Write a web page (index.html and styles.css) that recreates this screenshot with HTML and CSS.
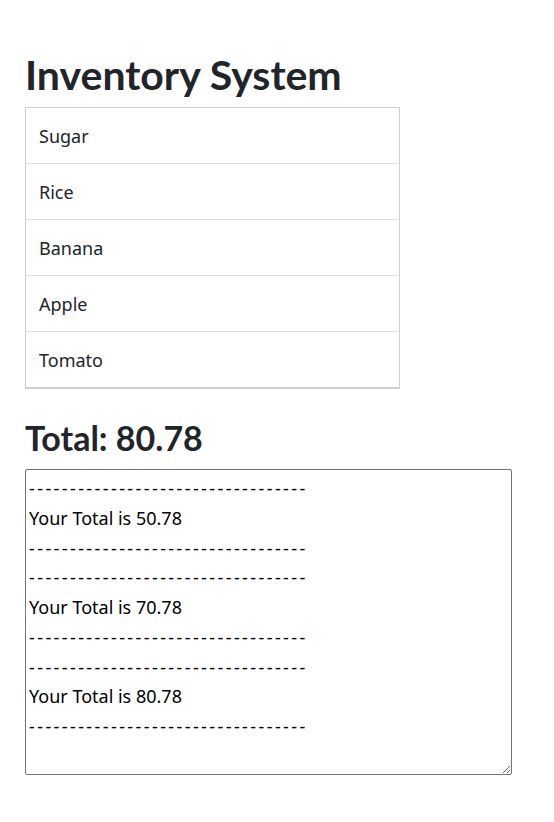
FILE: index.html
```html
<!DOCTYPE html>
<html>
<head>
<meta charset="utf-8">
<link rel="stylesheet" href="styles.css">
</head>
<body>
<div class="container">
  <h1 class="title">Inventory System</h1>
  <ul class="list">
    <li class="item">Sugar</li>
    <li class="item">Rice</li>
    <li class="item">Banana</li>
    <li class="item">Apple</li>
    <li class="item">Tomato</li>
  </ul>
  <h2 class="total">Total: 80.78</h2>
  <div class="log" role="textbox" aria-multiline="true" contenteditable="true"><div class="dash">----------------------------------</div><div class="line">Your Total is 50.78</div><div class="dash">----------------------------------</div><div class="dash">----------------------------------</div><div class="line">Your Total is 70.78</div><div class="dash">----------------------------------</div><div class="dash">----------------------------------</div><div class="line">Your Total is 80.78</div><div class="dash">----------------------------------</div></div>
</div>
</body>
</html>
```

FILE: styles.css
```css
html, body {
  margin: 0;
  padding: 0;
  background: #fff;
}
body {
  font-family: "Noto Sans", "Open Sans", sans-serif;
  color: #212529;
  font-size: 18px;
}
.container {
  padding: 51px 25px 0 25px;
}
.title {
  font-family: Lato, "Noto Sans", sans-serif;
  font-size: 41px;
  font-weight: 700;
  line-height: 48px;
  margin: 0 0 8px 0;
}
.list {
  list-style: none;
  margin: 0;
  padding: 0;
  width: 373px;
  border: 1px solid #cfcfcf;
  border-bottom-width: 2px;
}
.item {
  height: 53px;
  line-height: 53px;
  padding: 2px 13px 0 13px;
  border-bottom: 1px solid #dedede;
}
.item:last-child {
  border-bottom: none;
}
.total {
  font-family: Lato, "Noto Sans", sans-serif;
  font-size: 34px;
  font-weight: 700;
  line-height: 38px;
  margin: 30px 0 12px 0;
}
.log {
  box-sizing: border-box;
  width: 487px;
  height: 306px;
  font-size: 18px;
  line-height: 29.75px;
  color: #000;
  padding: 4px 3px;
  border: 1px solid #767676;
  border-radius: 2px;
  margin: 0;
  overflow: auto;
  resize: both;
  outline: none;
}
.line,
.dash {
  white-space: pre;
}
.dash {
  letter-spacing: 2.4px;
}
```
